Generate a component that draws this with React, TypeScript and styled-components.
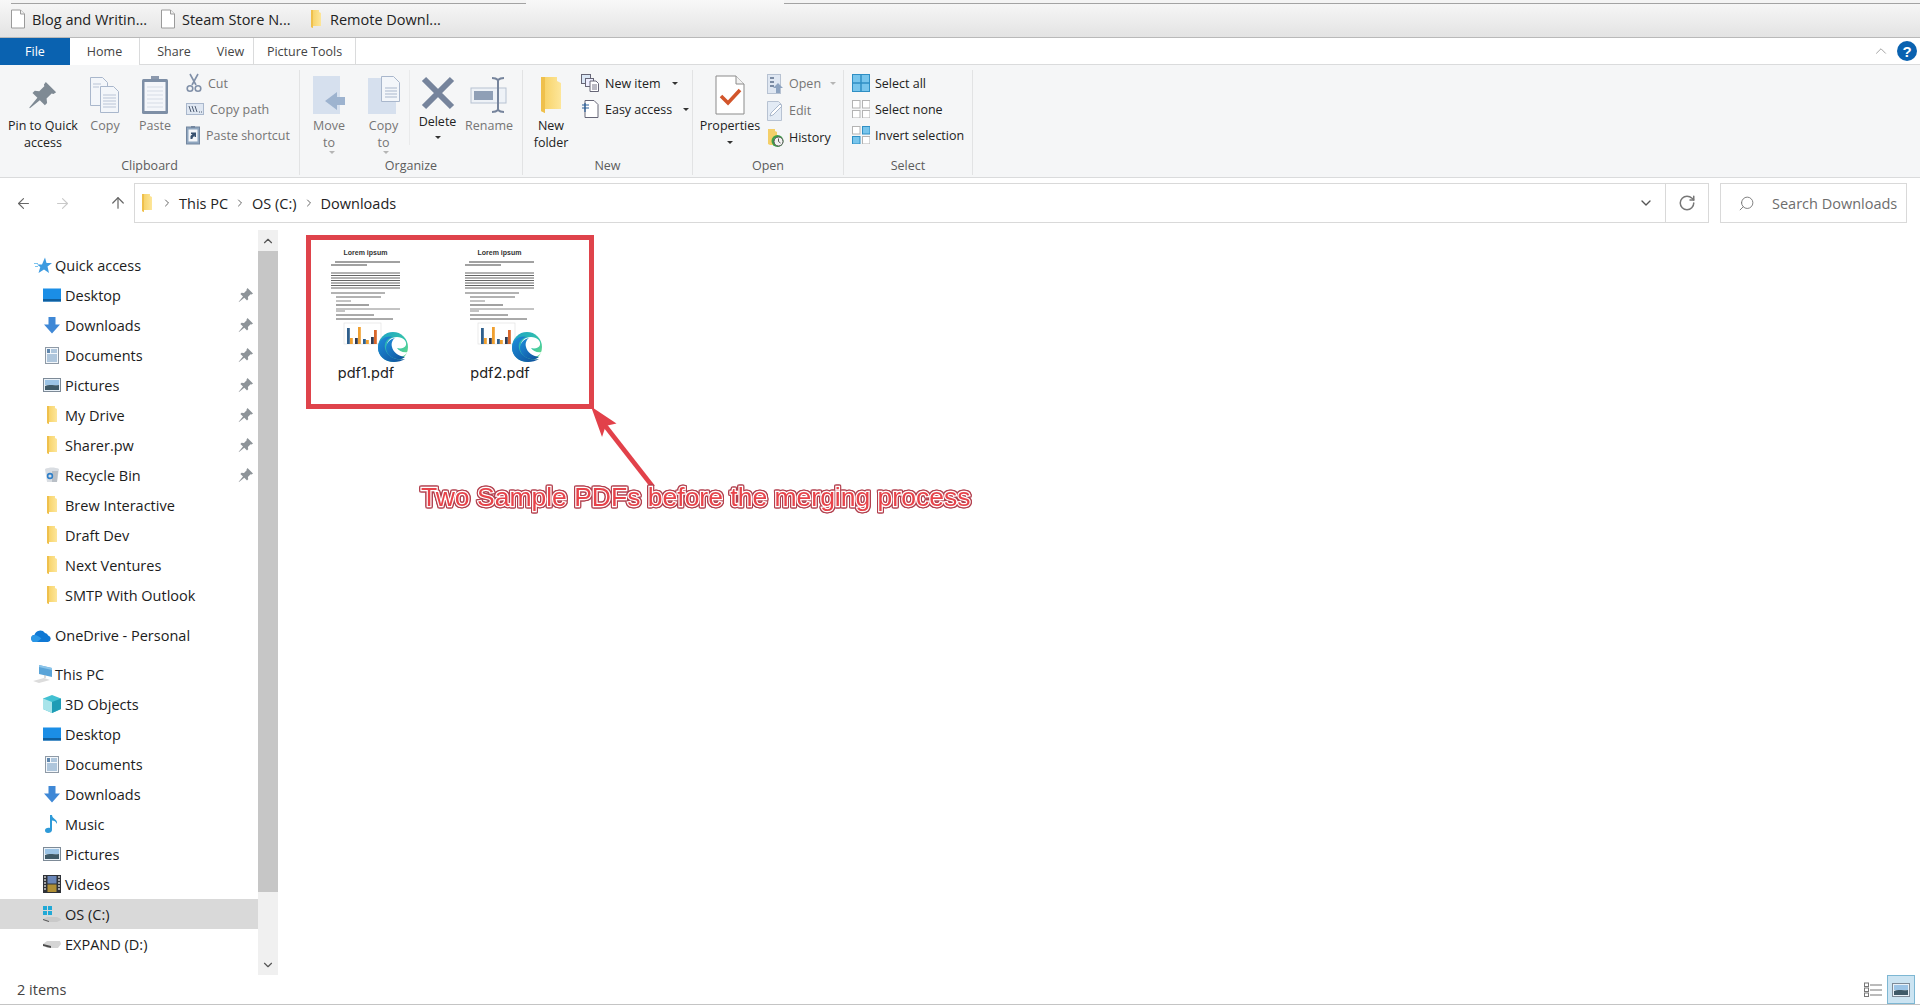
import React from "react";
import styled, { createGlobalStyle } from "styled-components";
import { ArrowLeft, ArrowRight, ArrowUp, ChevronDown, ChevronRight, ChevronUp, RotateCw, Search } from "lucide-react";

const Global = createGlobalStyle`
  html, body { margin: 0; padding: 0; background: #fff; overflow: hidden; }
  #root { width: 1920px; height: 1005px; }
  * { box-sizing: border-box; }
`;

const Page = styled.div`
  width: 1920px; height: 1005px; display: flex; flex-direction: column;
  font-family: "Open Sans", "Noto Sans", "Liberation Sans", sans-serif; color: #1c1c1c; background: #fff; overflow: hidden;
`;

/* ---------- top strip ---------- */
const Strip = styled.div`
  height: 38px; flex: none; background: linear-gradient(#f8f8f8, #e3e3e3); border-bottom: 1px solid #b9b9b9;
  display: flex; flex-direction: column;
`;
const StripEdge = styled.div`display: flex; height: 4px; flex: none;`;
const EdgeSeg = styled.div<{ $w?: number; $line?: boolean }>`
  width: ${p => (p.$w ? `${p.$w}px` : "auto")}; flex: ${p => (p.$w ? "none" : "1")};
  border-bottom: ${p => (p.$line ? "1px solid #a3a3a3" : "none")};
  background: ${p => (p.$line ? "#f4f4f4" : "transparent")};
`;
const QuickRow = styled.div`display: flex; align-items: center; flex: 1; padding-left: 10px; padding-bottom: 3px;`;
const QuickItem = styled.div<{ $w: number }>`
  width: ${p => p.$w}px; display: flex; align-items: center; gap: 6px; font-size: 14.5px; color: #222; white-space: nowrap;
`;

/* ---------- tabs ---------- */
const TabBar = styled.div`
  height: 27px; flex: none; display: flex; align-items: stretch; background: #fff; border-bottom: 1px solid #dadbdc; position: relative;
`;
const FileTab = styled.div`
  width: 70px; height: 27px; background: #0a62b0; color: #fff; font-size: 12.5px; display: flex; align-items: center; justify-content: center;
`;
const Tab = styled.div<{ $w: number; $active?: boolean; $sep?: boolean }>`
  width: ${p => p.$w}px; height: ${p => (p.$active ? "27px" : "26px")}; font-size: 12.5px; color: #444; display: flex; align-items: center; justify-content: center;
  background: #fff;
  border-right: ${p => (p.$active || p.$sep ? "1px solid #dadbdc" : "none")};
`;
const TabRight = styled.div`margin-left: auto; display: flex; align-items: center; gap: 7px; padding-right: 3px; color: #9a9a9a;`;
const HelpDot = styled.div`
  width: 20px; height: 20px; border-radius: 50%; background: #0a62b0; color: #fff; font-size: 15px; font-weight: 700;
  display: flex; align-items: center; justify-content: center; font-family: "Liberation Sans", sans-serif;
`;

/* ---------- ribbon ---------- */
const Ribbon = styled.div`
  height: 113px; flex: none; background: #f5f6f7; border-bottom: 1px solid #dadbdc; display: flex; padding-top: 5px;
`;
const Group = styled.div<{ $w: number }>`
  width: ${p => p.$w}px; height: 105px; border-right: 1px solid #e2e3e4; display: flex; flex-direction: column; flex: none;
`;
const GroupBody = styled.div`flex: 1; display: flex; align-items: flex-start;`;
const GroupLabel = styled.div`height: 18px; text-align: center; font-size: 12.5px; color: #5c5c5c; line-height: 18px;`;
const Large = styled.div<{ $w: number; $dim?: boolean; $sep?: boolean }>`
  width: ${p => p.$w}px; flex: none; display: flex; flex-direction: column; align-items: center; padding-top: 3px;
  font-size: 12.5px; line-height: 17px; color: ${p => (p.$dim ? "#757575" : "#222")}; text-align: center; white-space: nowrap;
  ${p => (p.$sep ? "border-left: 1px solid #e9eaeb; height: 75px;" : "")}
`;
const LargeIcon = styled.div`height: 44px; display: flex; align-items: center; justify-content: center;`;
const Caret = styled.span<{ $dim?: boolean }>`
  display: inline-block; width: 0; height: 0; border-left: 3.5px solid transparent; border-right: 3.5px solid transparent;
  border-top: 3.5px solid ${p => (p.$dim ? "#b5b5b5" : "#333")}; vertical-align: middle;
`;
const CaretLine = styled.div`height: 17px; display: flex; align-items: center; justify-content: center;`;
const CaretInline = styled(Caret)`margin-left: 5px;`;
const SmallCol = styled.div<{ $left: number; $rowH?: number }>`
  padding-left: ${p => p.$left}px; display: flex; flex-direction: column;
  & > div { height: ${p => p.$rowH ?? 26}px; }
`;
const SmallRow = styled.div<{ $dim?: boolean; $gap?: number }>`
  display: flex; align-items: center; gap: ${p => p.$gap ?? 6}px; font-size: 12.5px; white-space: nowrap; color: ${p => (p.$dim ? "#757575" : "#222")};
`;

/* ---------- address row ---------- */
const AddressRow = styled.div`height: 52px; flex: none; display: flex; align-items: flex-start; padding-top: 5px; background: #fff;`;
const NavButtons = styled.div`width: 134px; height: 40px; flex: none; display: flex; align-items: center; padding-left: 15px;`;
const NavBtn = styled.div<{ $w: number }>`width: ${p => p.$w}px; display: flex; justify-content: center; flex: none;`;
const AddressBox = styled.div`
  width: 1532px; height: 40px; flex: none; border: 1px solid #d9d9d9; display: flex; align-items: center; padding-left: 4px; font-size: 14.5px; color: #222;
`;
const Crumb = styled.span`white-space: nowrap;`;
const CrumbSep = styled.span`display: flex; width: 24px; justify-content: center; color: #666; flex: none;`;
const DropBtn = styled.div`margin-left: auto; padding-right: 11px; display: flex; color: #555;`;
const RefreshBox = styled.div`
  width: 43px; height: 40px; flex: none; border: 1px solid #d9d9d9; border-left: none; display: flex; align-items: center; justify-content: center; color: #777;
`;
const SearchBox = styled.div`
  width: 187px; height: 40px; margin-left: 11px; flex: none; border: 1px solid #d9d9d9; display: flex; align-items: center; padding-left: 17px; gap: 17px;
  font-size: 14.5px; color: #6d6d6d; white-space: nowrap;
`;
const FlipSearch = styled(Search)`transform: scaleX(-1); color: #777;`;

/* ---------- body ---------- */
const Body = styled.div`flex: 1; display: flex; min-height: 0;`;
const Nav = styled.div`width: 258px; flex: none; padding-top: 20px; display: flex; flex-direction: column;`;
const NavRow = styled.div<{ $indent: number; $sel?: boolean; $gapTop?: number }>`
  height: 30px; flex: none; display: flex; align-items: center; padding-left: ${p => p.$indent}px; padding-right: 4px;
  background: ${p => (p.$sel ? "#d9d9d9" : "transparent")}; margin-top: ${p => p.$gapTop ?? 0}px;
  font-size: 14.5px; color: #1c1c1c; white-space: nowrap;
`;
const NavIcon = styled.span<{ $w: number }>`width: ${p => p.$w}px; display: flex; justify-content: center; align-items: center; flex: none;`;
const PinSlot = styled.span`margin-left: auto; display: flex;`;
const Scrollbar = styled.div`width: 20px; margin-right: 0; flex: none; background: #f0f0f0; display: flex; flex-direction: column; color: #555;`;
const ScrollArrow = styled.div`height: 21px; flex: none; display: flex; align-items: center; justify-content: center;`;
const ScrollThumb = styled.div`height: 641px; flex: none; background: #c6c6c6;`;
const ScrollRest = styled.div`flex: 1;`;
const Main = styled.div`flex: 1; position: relative; padding: 15px 0 0 21px; display: flex; align-items: flex-start;`;
const FileItem = styled.div`width: 134px; display: flex; flex-direction: column; align-items: center; flex: none;`;
const FileName = styled.div`font-family: Inter, "Noto Sans", sans-serif; font-size: 14.5px; line-height: 20px; color: #222;`;
const Highlight = styled.div`position: absolute; left: 28px; top: 5px; width: 288px; height: 174px; border: 5px solid #df434b;`;
const ArrowSvg = styled.svg`position: absolute; left: 300px; top: 165px;`;
const Note = styled.div`
  position: absolute; left: 143px; top: 250px; font-family: "Liberation Sans", sans-serif; font-size: 26.5px; line-height: 34px; white-space: nowrap;
  color: #e8434a; -webkit-text-stroke: 2.4px #fff; paint-order: stroke fill;
  filter: drop-shadow(1px 0 0 #b23f4d) drop-shadow(-1px 0 0 #b23f4d) drop-shadow(0 1px 0 #b23f4d) drop-shadow(0 -1px 0 #b23f4d);
`;

/* ---------- status ---------- */
const Status = styled.div`
  height: 30px; flex: none; display: flex; align-items: center; padding: 0 5px 0 17px; border-bottom: 1px solid #c4c4c4; font-size: 14.5px; color: #444; 
`;
const ViewBtns = styled.div`margin-left: auto; display: flex; align-items: center; gap: 5px; height: 100%;`;
const ThumbActive = styled.div`
  width: 28px; height: 29px; background: #cce4f2; border: 1px solid #7db7d3; display: flex; align-items: center; justify-content: center;
`;

/* ---------- drawings ---------- */
const Doc = () => (
  <svg width="16" height="20" viewBox="0 0 16 20"><path d="M1.5 1h9l4 4v14h-13z" fill="#fff" stroke="#9a9a9a" /><path d="M10.5 1v4h4" fill="#f0f0f0" stroke="#9a9a9a" /></svg>
);
const Folder = ({ w = 16, h = 20 }: { w?: number; h?: number }) => (
  <svg width={w} height={h} viewBox="0 0 16 20">
    <defs><linearGradient id="fo" x1="0" x2="1"><stop offset="0" stopColor="#f6cf60" /><stop offset="1" stopColor="#fde69a" /></linearGradient></defs>
    <path d="M3 1h8v2l2 1v13H5v2l-2-1z" fill="url(#fo)" />
    <path d="M3 1h2v18l-2-1z" fill="#efc04c" />
  </svg>
);
const Pin = ({ s = 16, c = "#8e9499" }: { s?: number; c?: string }) => (
  <svg width={s} height={s} viewBox="0 0 16 16"><path d="M9.5 1l5.5 5.5-1.4 1-1-.3-2.7 2.7.3 2.4-1.2 1.2-2.7-2.7L1 15l-.3-.3 4.3-5.2L2.4 6.9l1.2-1.2 2.4.3L8.7 3.3 8.5 2.4z" fill={c} /></svg>
);
const CopyBig = () => (
  <svg width="32" height="38" viewBox="0 0 32 38" fill="#f3f6fa" stroke="#a9b7cc"><path d="M1.5 1.5h12l5 5v23h-17z" /><path d="M11.5 10.5h13l5 5v21h-18z" /><path d="M14 19h13M14 22h13M14 25h13M14 28h13M14 31h13M4 8h8M4 11h6" stroke="#b9c4d6" /></svg>
);
const PasteBig = () => (
  <svg width="28" height="40" viewBox="0 0 28 40"><rect x="1" y="4" width="26" height="35" rx="1.5" fill="#7e8fa6" /><rect x="3.5" y="7" width="21" height="29" fill="#f4f6fa" /><path d="M6 12h16M6 16h16M6 20h16M6 24h16M6 28h16M6 32h16" stroke="#d6dce6" /><path d="M10 4h8V1h-8z" fill="#8c99ad" /></svg>
);
const Scissors = () => (
  <svg width="16" height="20" viewBox="0 0 16 20" fill="none" stroke="#8090a8" strokeWidth="1.6"><path d="M4 1l6 11M12 1L6 12" /><circle cx="4" cy="15.5" r="2.8" /><circle cx="12" cy="15.5" r="2.8" /></svg>
);
const CopyPath = () => (
  <svg width="18" height="14" viewBox="0 0 18 14"><rect x=".5" y="1.5" width="17" height="11" fill="#dfe7f2" stroke="#a9b7cc" /><path d="M3 4l2 6M6 4l2 6M9 4l2 6M13 10h1M15 10h1" stroke="#4e5c72" /></svg>
);
const PasteShort = () => (
  <svg width="14" height="20" viewBox="0 0 14 20"><rect x=".5" y="2" width="13" height="17" fill="#8fa6bf" stroke="#73869f" /><rect x="2.5" y="4.5" width="9" height="12" fill="#f4f6fa" /><path d="M5 1h4v2H5z" fill="#73869f" /><path d="M4.5 14v-3l2-2H5V7.5h5V12H8.5v-1.5L6.5 13v1z" fill="#37506f" /></svg>
);
const MoveTo = () => (
  <svg width="34" height="40" viewBox="0 0 34 40"><rect x="1" y="1" width="27" height="38" fill="#d6e0ee" /><path d="M13 26l12-9v5h8v8h-8v5z" fill="#9db3cf" /></svg>
);
const CopyTo = () => (
  <svg width="34" height="40" viewBox="0 0 34 40"><rect x="1" y="3" width="28" height="36" fill="#d6e0ee" /><path d="M14.5 1.5h12l6 6v19h-18z" fill="#f3f6fa" stroke="#a9b7cc" /><path d="M18 13h12M18 16h12M18 19h12M18 22h12" stroke="#a9b7cc" /></svg>
);
const DeleteX = () => (
  <svg width="34" height="34" viewBox="0 0 34 34"><path d="M3 3l28 28M31 3L3 31" stroke="#76849c" strokeWidth="6" /></svg>
);
const RenameI = () => (
  <svg width="38" height="38" viewBox="0 0 38 38"><rect x="1" y="12" width="35" height="15" fill="#eef2f7" stroke="#b7c2d2" /><rect x="4" y="15" width="19" height="9" fill="#8f9fb6" /><path d="M22 2c3 0 5 1 6 2 1-1 3-2 6-2M28 4v30M22 36c3 0 5-1 6-2 1 1 3 2 6 2" stroke="#76849c" strokeWidth="2" fill="none" /></svg>
);
const NewItem = () => (
  <svg width="18" height="18" viewBox="0 0 18 18"><rect x=".5" y=".5" width="9" height="9" fill="#dbe7f5" stroke="#667" /><rect x="4.5" y="4.5" width="8" height="8" fill="#eef" stroke="#667" /><path d="M9 7h6l2.5 2.5v8H9z" fill="#fff" stroke="#667" /><path d="M11 11h5M11 13h5M11 15h5" stroke="#778" /></svg>
);
const EasyAccess = () => (
  <svg width="18" height="20" viewBox="0 0 18 20"><path d="M4 1.5h9l4 4v13H4z" fill="#fff" stroke="#667" /><path d="M1 6h7M1 9h7M4 4v9" stroke="#2a5f9a" strokeWidth="1.2" /></svg>
);
const PropsBig = () => (
  <svg width="30" height="40" viewBox="0 0 30 40"><path d="M1 1h20l8 8v30H1z" fill="#fff" stroke="#8b8b8b" /><path d="M21 1v8h8" fill="#f2f2f2" stroke="#8b8b8b" /><path d="M6 21l7 7 12-13" stroke="#d2552b" strokeWidth="3.6" fill="none" /></svg>
);
const OpenIc = () => (
  <svg width="18" height="20" viewBox="0 0 18 20"><rect x=".5" y=".5" width="13" height="19" fill="#dfe7f2" stroke="#b7c2d2" /><path d="M3 4h4M3 8h4M3 12h4" stroke="#7b8ba3" strokeWidth="2" /><path d="M6 14l5-5 5 5h-3v5H9v-5z" fill="#8da3c0" /></svg>
);
const EditIc = () => (
  <svg width="18" height="20" viewBox="0 0 18 20"><path d="M.5.5h11l3 3v16H.5z" fill="#e3ebf5" stroke="#b7c2d2" /><path d="M3 15l1-3 9-9 2 2-9 9z" fill="#fff" stroke="#a9b7cc" /></svg>
);
const HistoryIc = () => (
  <svg width="18" height="20" viewBox="0 0 18 20"><path d="M1 1h7v2l2 1v13H3l-2-1z" fill="#f4cf69" /><circle cx="10.5" cy="13" r="6" fill="#3fa04a" /><circle cx="11.5" cy="13.5" r="4.5" fill="#f2f2f2" stroke="#555" /><path d="M11.5 10.5v3l2 1.5" stroke="#555" fill="none" /></svg>
);
const Squares = ({ on }: { on: boolean[] }) => (
  <svg width="18" height="18" viewBox="0 0 18 18">
    {[[0, 0], [10, 0], [0, 10], [10, 10]].map(([x, y], i) => (
      <rect key={i} x={x + 0.5} y={y + 0.5} width={7.5} height={7.5} fill={on[i] ? "#78c5ec" : "#fff"} stroke={on[i] ? "#2f8fc4" : "#b3b3b3"} />
    ))}
  </svg>
);
const SelectAll = () => (
  <svg width="18" height="18" viewBox="0 0 18 18"><rect x=".5" y=".5" width="17" height="17" fill="#78c5ec" stroke="#2f8fc4" /><path d="M9 0v18M0 9h18" stroke="#2f8fc4" strokeWidth="1.5" /></svg>
);
const Star = () => (
  <svg width="18" height="17" viewBox="0 0 18 17"><path d="M11 .5l1.5 5.5H18l-4.5 3.6L15 16l-5-3.5L4.5 16l1.8-6L3 7.5h5z" fill="#3d9be0" /><path d="M0 6.5h4M1 9.5h3" stroke="#7cc4ee" /></svg>
);
const Desktop = () => (
  <svg width="18" height="14" viewBox="0 0 18 14"><rect width="18" height="13" y=".5" fill="#1b8ee6" /><rect y="11" width="18" height="2.5" fill="#105f9e" /></svg>
);
const DownArrow = () => (
  <svg width="18" height="17" viewBox="0 0 18 17"><path d="M5.5 0h7v7.5H17L9 16.5 1 7.5h4.5z" fill="#3f88d6" /></svg>
);
const Documents = () => (
  <svg width="14" height="17" viewBox="0 0 14 17"><rect x=".5" y=".5" width="13" height="16" fill="#f3f7fb" stroke="#8f9aa6" /><path d="M6 3h6M6 5h6M2 8h10M2 10h10M2 12h10M2 14h10" stroke="#6b95bd" /><rect x="2" y="2" width="3" height="4" fill="#5f86ad" /></svg>
);
const Pictures = () => (
  <svg width="18" height="14" viewBox="0 0 18 14"><rect x=".5" y=".5" width="17" height="13" fill="#e9f1f8" stroke="#7d8a97" /><rect x="2" y="2" width="14" height="5" fill="#9cc4e6" /><path d="M2 8c4-2 8 0 14-1v5H2z" fill="#3f5a68" /></svg>
);
const Recycle = () => (
  <svg width="16" height="16" viewBox="0 0 16 16"><path d="M1 2c4-2 10-2 14 0l-2 13H3z" fill="#d9dde2" /><path d="M8 4h6l-1 11H8z" fill="#b9bfc6" /><circle cx="6" cy="9" r="2.4" fill="none" stroke="#2f7fc8" strokeWidth="1.6" /></svg>
);
const OneDrive = () => (
  <svg width="21" height="14" viewBox="0 0 21 14"><path d="M4 14a3.5 3.5 0 0 1-.6-7A6 6 0 0 1 14 5a4.6 4.6 0 0 1 3.2 2.4A3.4 3.4 0 0 1 17 14z" fill="#0f78d4" /><path d="M4 14a3.5 3.5 0 0 1-.6-7c3 0 5 2 7 3.5L6 14z" fill="#2a97e6" /></svg>
);
const ThisPc = () => (
  <svg width="20" height="20" viewBox="0 0 20 20"><path d="M6 1l13 3v9L6 10z" fill="#5aa4d8" /><path d="M6 1l13 3v2L6 3z" fill="#8cc5ea" /><path d="M0 17l11-3 6 2-11 3z" fill="#dcdcdc" /><path d="M12 11v3" stroke="#bbb" /></svg>
);
const Objects3D = () => (
  <svg width="18" height="18" viewBox="0 0 18 18"><path d="M9 0l9 3.5V14l-9 4-9-4V3.5z" fill="#42c0d2" /><path d="M9 7L0 3.5V14l9 4z" fill="#a8e4ea" /><path d="M9 7l9-3.5V14l-9 4z" fill="#1f9cb5" /></svg>
);
const Music = () => (
  <svg width="14" height="18" viewBox="0 0 14 18"><path d="M5 0h2c0 4 6 4 5 9-1-2.500-3-3.500-5-3.500V15c0 2-2 3-4 3s-3-1-3-2.500C0 13.500 2 12.500 5 13z" fill="#2e9ad8" /></svg>
);
const Videos = () => (
  <svg width="18" height="18" viewBox="0 0 18 18"><rect width="18" height="18" fill="#2f3238" /><path d="M1 2h2M1 5h2M1 8h2M1 11h2M1 14h2M15 2h2M15 5h2M15 8h2M15 11h2M15 14h2" stroke="#ccc" strokeWidth="1.4" /><rect x="4.500" y="1" width="9" height="7.500" fill="#6a86b8" /><rect x="4.500" y="9.500" width="9" height="7.500" fill="#b08f35" /></svg>
);
const OsDrive = () => (
  <svg width="20" height="18" viewBox="0 0 20 18"><path d="M1 1h4v4H1zM6 1h4v4H6zM1 6h4v4H1zM6 6h4v4H6z" fill="#21a9d6" /><path d="M1 14l4-2h10l4 2v1l-4 2H5l-4-2z" fill="#c9c9c9" /><path d="M1 14l6 2v1l-6-2z" fill="#555" /></svg>
);
const Drive = () => (
  <svg width="20" height="9" viewBox="0 0 20 9"><path d="M1 4l4-3h13l1 3-3 4H5z" fill="#d5d5d5" /><path d="M1 4l8 2v2l-8-2z" fill="#4d4d4d" /></svg>
);
const DetailsIc = () => (
  <svg width="18" height="16" viewBox="0 0 18 16" stroke="#777" fill="none"><rect x=".5" y="1" width="4" height="3.500" /><rect x=".5" y="6" width="4" height="3.500" /><rect x=".5" y="11" width="4" height="3.500" /><path d="M6 3h12M6 8h12M6 13h12" /></svg>
);

const Lines = ({ ys, x1 = 20, x2 = 89, c = "#555", w = 1 }: { ys: number[]; x1?: number; x2?: number; c?: string; w?: number }) => (
  <>{ys.map(y => <line key={y} x1={x1} x2={x2} y1={y} y2={y} stroke={c} strokeWidth={w} />)}</>
);
const bars: [number, number, string][] = [
  [36, 16, "#2f5f8c"], [39, 6, "#f0a030"], [44, 6, "#333c52"], [47, 17, "#f0a030"], [52, 5, "#2f5f8c"], [55, 4, "#f0a030"], [60, 7, "#333c52"], [63, 14, "#d9662a"],
];
const FileThumb = ({ id }: { id: string }) => (
  <svg width="110" height="118" viewBox="0 0 110 118">
    <defs>
      <linearGradient id={`g${id}`} x1="0" y1="0" x2="1" y2="1"><stop offset="0" stopColor="#1aa0c8" /><stop offset=".6" stopColor="#37c6a8" /><stop offset="1" stopColor="#7fe07a" /></linearGradient>
      <linearGradient id={`b${id}`} x1="0" y1="0" x2="1" y2="1"><stop offset="0" stopColor="#1f8fdc" /><stop offset="1" stopColor="#0d4f98" /></linearGradient>
    </defs>
    <text x="54.500" y="10" textAnchor="middle" fontSize="7" fontWeight="700" fontFamily="Liberation Sans, sans-serif" fill="#333">Lorem ipsum</text>
    <Lines ys={[17]} x1={24} x2={89} w={1.2} c="#444" />
    <Lines ys={[20]} x1={20} x2={56} w={1.2} c="#444" />
    <Lines ys={[28, 30.500, 33, 35.500, 38, 40.500, 43]} c="#666" />
    <Lines ys={[48]} x1={20} x2={74} c="#666" />
    <Lines ys={[52]} x1={25} x2={70} c="#666" />
    <Lines ys={[56]} x1={25} x2={40} c="#888" />
    <Lines ys={[60]} x1={25} x2={58} c="#444" w={1.2} />
    <Lines ys={[64]} x1={25} x2={89} c="#888" />
    <Lines ys={[66]} x1={25} x2={34} c="#888" />
    <Lines ys={[70]} x1={25} x2={63} c="#555" />
    <Lines ys={[74]} x1={25} x2={82} c="#555" />
    <rect x="33" y="78" width="37" height="21" fill="#fff" stroke="#ddd" strokeWidth=".6" />
    {bars.map(([x, h, c]) => <rect key={x} x={x} y={99 - h} width="2.800" height={h} fill={c} />)}
    <circle cx="82" cy="102" r="15" fill={`url(#g${id})`} />
    <path d="M67 103c0-9 8-13 15-11-6 1-9 6-8 11 1 7 9 13 20 11-3 2-7 3-11 3-9 0-16-6-16-14z" fill={`url(#b${id})`} />
    <path d="M76 102c-1-6 4-10 10-10 6 0 10 4 9 8-1 3-5 4-9 3 2 3 6 5 11 4-2 3-6 5-10 5-6 0-10-5-11-10z" fill="#fff" />
    <path d="M75 103c0-5 4-9 9-10-3 2-4 6-3 9 1 5 6 9 13 10-3 2-6 3-8 2-6-1-11-5-11-11z" fill={`url(#b${id})`} />
  </svg>
);

const quick = [
  ["Desktop", Desktop], ["Downloads", DownArrow], ["Documents", Documents], ["Pictures", Pictures], ["My Drive", Folder], ["Sharer.pw", Folder], ["Recycle Bin", Recycle],
] as const;
const folders = ["Brew Interactive", "Draft Dev", "Next Ventures", "SMTP With Outlook"];
const pcItems = [
  ["3D Objects", Objects3D], ["Desktop", Desktop], ["Documents", Documents], ["Downloads", DownArrow], ["Music", Music], ["Pictures", Pictures], ["Videos", Videos], ["OS (C:)", OsDrive], ["EXPAND (D:)", Drive],
] as const;

export default function App() {
  return (
    <Page>
      <Global />
      <Strip>
        <StripEdge>
          <EdgeSeg $w={11} />
          <EdgeSeg $w={515} $line />
          <EdgeSeg $w={258} />
          <EdgeSeg $line />
        </StripEdge>
        <QuickRow>
          <QuickItem $w={150}><Doc />Blog and Writin...</QuickItem>
          <QuickItem $w={148}><Doc />Steam Store N...</QuickItem>
          <QuickItem $w={140}><Folder />Remote Downl...</QuickItem>
        </QuickRow>
      </Strip>
      <TabBar>
        <FileTab>File</FileTab>
        <Tab $w={70} $active>Home</Tab>
        <Tab $w={68}>Share</Tab>
        <Tab $w={46} $sep>View</Tab>
        <Tab $w={102} $sep>Picture Tools</Tab>
        <TabRight>
          <ChevronUp size={18} strokeWidth={1.2} />
          <HelpDot>?</HelpDot>
        </TabRight>
      </TabBar>
      <Ribbon>
        <Group $w={300}>
          <GroupBody>
            <Large $w={86}><LargeIcon><Pin s={30} c="#7f8a94" /></LargeIcon>Pin to Quick<br />access</Large>
            <Large $w={38} $dim><LargeIcon><CopyBig /></LargeIcon>Copy</Large>
            <Large $w={62} $dim><LargeIcon><PasteBig /></LargeIcon>Paste</Large>
            <SmallCol $left={0}>
              <SmallRow $dim $gap={6}><Scissors />Cut</SmallRow>
              <SmallRow $dim $gap={6}><CopyPath />Copy path</SmallRow>
              <SmallRow $dim $gap={6}><PasteShort />Paste shortcut</SmallRow>
            </SmallCol>
          </GroupBody>
          <GroupLabel>Clipboard</GroupLabel>
        </Group>
        <Group $w={223}>
          <GroupBody>
            <Large $w={58} $dim><LargeIcon><MoveTo /></LargeIcon>Move<br />to <CaretInline $dim /></Large>
            <Large $w={51} $dim><LargeIcon><CopyTo /></LargeIcon>Copy<br />to <CaretInline $dim /></Large>
            <Large $w={56} $sep><LargeIcon><DeleteX /></LargeIcon>Delete<CaretLine><Caret /></CaretLine></Large>
            <Large $w={48} $dim><LargeIcon><RenameI /></LargeIcon>Rename</Large>
          </GroupBody>
          <GroupLabel>Organize</GroupLabel>
        </Group>
        <Group $w={170}>
          <GroupBody>
            <Large $w={56}><LargeIcon><Folder w={32} h={40} /></LargeIcon>New<br />folder</Large>
            <SmallCol $left={2}>
              <SmallRow $gap={6}><NewItem />New item<CaretInline /></SmallRow>
              <SmallRow $gap={6}><EasyAccess />Easy access<CaretInline /></SmallRow>
            </SmallCol>
          </GroupBody>
          <GroupLabel>New</GroupLabel>
        </Group>
        <Group $w={151}>
          <GroupBody>
            <Large $w={74}><LargeIcon><PropsBig /></LargeIcon>Properties<CaretLine><Caret /></CaretLine></Large>
            <SmallCol $left={0} $rowH={27}>
              <SmallRow $dim $gap={4}><OpenIc />Open<CaretInline $dim /></SmallRow>
              <SmallRow $dim $gap={4}><EditIc />Edit</SmallRow>
              <SmallRow $gap={4}><HistoryIc />History</SmallRow>
            </SmallCol>
          </GroupBody>
          <GroupLabel>Open</GroupLabel>
        </Group>
        <Group $w={129}>
          <GroupBody>
            <SmallCol $left={8}>
              <SmallRow $gap={5}><SelectAll />Select all</SmallRow>
              <SmallRow $gap={5}><Squares on={[false, false, false, false]} />Select none</SmallRow>
              <SmallRow $gap={5}><Squares on={[false, true, true, false]} />Invert selection</SmallRow>
            </SmallCol>
          </GroupBody>
          <GroupLabel>Select</GroupLabel>
        </Group>
      </Ribbon>
      <AddressRow>
        <NavButtons>
          <NavBtn $w={17}><ArrowLeft size={17} color="#666" strokeWidth={1.6} /></NavBtn>
          <NavBtn $w={60}><ArrowRight size={17} color="#c9c9c9" strokeWidth={1.6} /></NavBtn>
          <NavBtn $w={0}><ChevronDown size={13} color="#777" strokeWidth={2} /></NavBtn>
          <NavBtn $w={52}><ArrowUp size={18} color="#666" strokeWidth={1.6} /></NavBtn>
        </NavButtons>
        <AddressBox>
          <Folder />
          <CrumbSep><ChevronRight size={12} /></CrumbSep>
          <Crumb>This PC</Crumb>
          <CrumbSep><ChevronRight size={12} /></CrumbSep>
          <Crumb>OS (C:)</Crumb>
          <CrumbSep><ChevronRight size={12} /></CrumbSep>
          <Crumb>Downloads</Crumb>
          <DropBtn><ChevronDown size={16} strokeWidth={2} /></DropBtn>
        </AddressBox>
        <RefreshBox><RotateCw size={18} strokeWidth={2} /></RefreshBox>
        <SearchBox><FlipSearch size={17} strokeWidth={1.3} />Search Downloads</SearchBox>
      </AddressRow>
      <Body>
        <Nav>
          <NavRow $indent={31}><NavIcon $w={24}><Star /></NavIcon>Quick access</NavRow>
          {quick.map(([label, Icon]) => (
            <NavRow key={label} $indent={39}><NavIcon $w={26}><Icon /></NavIcon>{label}<PinSlot><Pin /></PinSlot></NavRow>
          ))}
          {folders.map(label => (
            <NavRow key={label} $indent={39}><NavIcon $w={26}><Folder /></NavIcon>{label}</NavRow>
          ))}
          <NavRow $indent={28} $gapTop={10}><NavIcon $w={27}><OneDrive /></NavIcon>OneDrive - Personal</NavRow>
          <NavRow $indent={31} $gapTop={9}><NavIcon $w={24}><ThisPc /></NavIcon>This PC</NavRow>
          {pcItems.map(([label, Icon]) => (
            <NavRow key={label} $indent={39} $sel={label === "OS (C:)"}><NavIcon $w={26}><Icon /></NavIcon>{label}</NavRow>
          ))}
        </Nav>
        <Scrollbar>
          <ScrollArrow><ChevronUp size={14} strokeWidth={2} /></ScrollArrow>
          <ScrollThumb />
          <ScrollRest />
          <ScrollArrow><ChevronDown size={14} strokeWidth={2} /></ScrollArrow>
        </Scrollbar>
        <Main>
          <FileItem><FileThumb id="a" /><FileName>pdf1.pdf</FileName></FileItem>
          <FileItem><FileThumb id="b" /><FileName>pdf2.pdf</FileName></FileItem>
          <Highlight />
          <ArrowSvg width="80" height="100" viewBox="0 0 80 100">
            <path d="M75 92L25 28" stroke="#e2414a" strokeWidth="4.500" />
            <path d="M15 14L36 28 27 30 24 39z" fill="#e2414a" stroke="#e2414a" strokeWidth="2" />
          </ArrowSvg>
          <Note>Two Sample PDFs before the merging process</Note>
        </Main>
      </Body>
      <Status>
        2 items
        <ViewBtns>
          <DetailsIc />
          <ThumbActive><Pictures /></ThumbActive>
        </ViewBtns>
      </Status>
    </Page>
  );
}
